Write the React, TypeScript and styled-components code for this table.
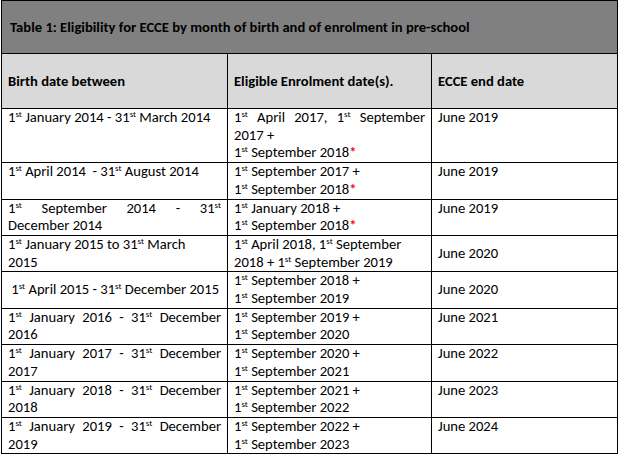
import React from "react";
import styled, { createGlobalStyle } from "styled-components";

const GlobalStyle = createGlobalStyle`
  html, body {
    margin: 0;
    padding: 0;
    background: #ffffff;
  }
  body {
    font-family: Carlito, Lato, "Liberation Sans", sans-serif;
    color: #000000;
  }
`;

type Align = "top" | "middle";

interface Row {
  birth: React.ReactNode[][];
  birthAlign?: Align;
  birthJustify?: boolean;
  enrol: React.ReactNode[][];
  enrolJustifyFirst?: boolean;
  end: string;
  endAlign?: Align;
}

const St = () => <Sup>st</Sup>;
const Asterisk = () => <Star>*</Star>;

const rows: Row[] = [
  {
    birth: [[<>1<St /> January 2014 - 31<St /> March 2014</>]],
    enrol: [
      [<>1<St /> April 2017, 1<St /> September</>],
      [<>2017 +</>],
      [<>1<St /> September 2018<Asterisk /></>],
    ],
    enrolJustifyFirst: true,
    end: "June 2019",
  },
  {
    birth: [[<>1<St /> April 2014 &nbsp;- 31<St /> August 2014</>]],
    enrol: [
      [<>1<St /> September 2017 +</>],
      [<>1<St /> September 2018<Asterisk /></>],
    ],
    end: "June 2019",
  },
  {
    birth: [[<>1<St /> September 2014 - 31<St /></>], [<>December 2014</>]],
    birthJustify: true,
    enrol: [
      [<>1<St /> January 2018 +</>],
      [<>1<St /> September 2018<Asterisk /></>],
    ],
    end: "June 2019",
  },
  {
    birth: [[<>1<St /> January 2015 to 31<St /> March</>], [<>2015</>]],
    enrol: [
      [<>1<St /> April 2018, 1<St /> September</>],
      [<>2018 + 1<St /> September 2019</>],
    ],
    end: "June 2020",
    endAlign: "middle",
  },
  {
    birth: [[<>&nbsp;1<St /> April 2015 - 31<St /> December 2015</>]],
    birthAlign: "middle",
    enrol: [
      [<>1<St /> September 2018 +</>],
      [<>1<St /> September 2019</>],
    ],
    end: "June 2020",
    endAlign: "middle",
  },
  ...[2016, 2017, 2018, 2019].map((year, i) => ({
    birth: [[<>1<St /> January {year} - 31<St /> December</>], [<>{year}</>]],
    birthJustify: true,
    enrol: [
      [<>1<St /> September {2019 + i} +</>],
      [<>1<St /> September {2020 + i}</>],
    ],
    end: `June ${2021 + i}`,
  })),
];

export default function App() {
  return (
    <>
      <GlobalStyle />
      <Page>
        <Table>
          <colgroup>
            <col style={{ width: 226 }} />
            <col style={{ width: 204 }} />
            <col style={{ width: 186 }} />
          </colgroup>
          <thead>
            <tr>
              <TitleCell colSpan={3}>
                Table 1: Eligibility for ECCE by month of birth and of enrolment in pre-school
              </TitleCell>
            </tr>
            <tr>
              <HeadCell>Birth date between</HeadCell>
              <HeadCell>Eligible Enrolment date(s).</HeadCell>
              <HeadCell>ECCE end date</HeadCell>
            </tr>
          </thead>
          <tbody>
            {rows.map((row, r) => (
              <tr key={r}>
                <Cell $align={row.birthAlign ?? "top"}>
                  {row.birth.map((line, l) => (
                    <Line key={l} $justify={!!row.birthJustify && l < row.birth.length - 1}>
                      {line}
                    </Line>
                  ))}
                </Cell>
                <Cell $align="top">
                  {row.enrol.map((line, l) => (
                    <Line key={l} $justify={!!row.enrolJustifyFirst && l === 0}>
                      {line}
                    </Line>
                  ))}
                </Cell>
                <Cell $align={row.endAlign ?? "top"}>
                  <Line $justify={false}>{row.end}</Line>
                </Cell>
              </tr>
            ))}
          </tbody>
        </Table>
      </Page>
    </>
  );
}

const Page = styled.div`
  padding: 0 0 0 1px;
`;

const Table = styled.table`
  border-collapse: collapse;
  table-layout: fixed;
  width: 617px;
  font-size: 14.6px;
`;

const TitleCell = styled.th`
  height: 52px;
  padding: 0 8px;
  background: #808080;
  border: 1px solid #000000;
  text-align: left;
  vertical-align: middle;
  font-weight: 700;
  line-height: 18px;
`;

const HeadCell = styled.th`
  height: 54px;
  padding: 0 6px;
  background: #d9d9d9;
  border: 1px solid #000000;
  text-align: left;
  vertical-align: middle;
  font-weight: 700;
  line-height: 18px;
`;

const Cell = styled.td<{ $align: Align }>`
  padding: 0 6px;
  border: 1px solid #000000;
  vertical-align: ${(p) => p.$align};
  line-height: 17.7px;
  white-space: nowrap;
`;

const Line = styled.div<{ $justify: boolean }>`
  text-align: ${(p) => (p.$justify ? "justify" : "left")};
  text-align-last: ${(p) => (p.$justify ? "justify" : "left")};
  white-space: ${(p) => (p.$justify ? "normal" : "nowrap")};
`;

const Sup = styled.sup`
  font-size: 9px;
  line-height: 0;
  vertical-align: 5px;
`;

const Star = styled.span`
  color: #ff0000;
  font-weight: 700;
`;
